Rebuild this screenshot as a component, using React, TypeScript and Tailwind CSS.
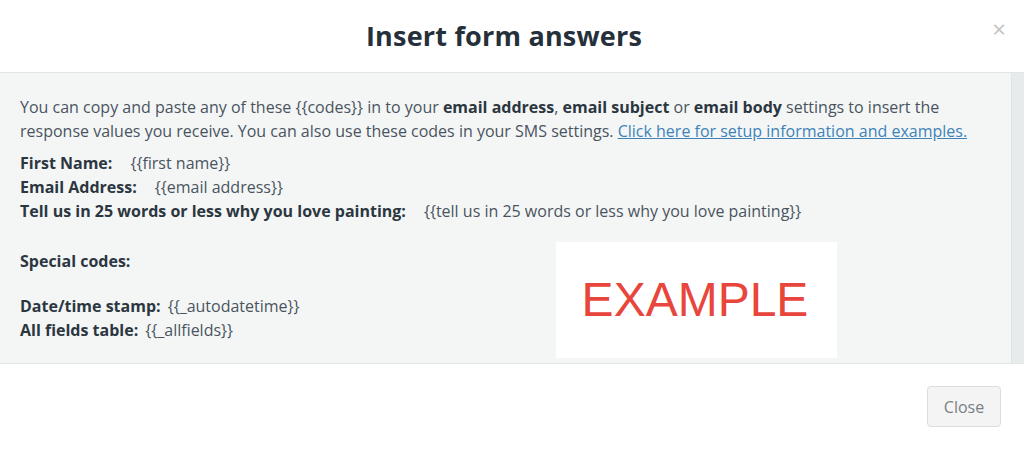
import React from "react";

export default function App() {
  const font = { fontFamily: '"Open Sans", "Noto Sans", sans-serif' };
  return (
    <div className="w-[1024px] h-[450px] bg-white flex flex-col overflow-hidden" style={font}>
      {/* Header */}
      <div className="h-[73px] shrink-0 flex items-center justify-center relative border-b border-[#e3e6e6]">
        <h1 className="text-[27px] font-bold text-[#25303a] tracking-[0.2px] mt-[1px] -ml-[16px]">Insert form answers</h1>
        <span className="absolute right-[18px] top-[17px] text-[24px] leading-none text-[#c4c4c4]">×</span>
      </div>

      {/* Body */}
      <div className="h-[291px] shrink-0 flex bg-[#f4f6f6] border-b border-[#e3e6e6]">
        <div className="flex-1 pl-[20px] pr-[20px] pt-[22px] text-[16px] leading-[24px] text-[#4a545e]">
          <p>
            You can copy and paste any of these {"{{codes}}"} in to your{" "}
            <b className="text-[#2c3640]">email address</b>,{" "}
            <b className="text-[#2c3640]">email subject</b> or{" "}
            <b className="text-[#2c3640]">email body</b> settings to insert the response values you receive. You can also use these codes in your SMS settings.{" "}
            <a className="text-[#3f82b8] underline">Click here for setup information and examples.</a>
          </p>
          <div className="mt-[8px]">
            <div>
              <b className="text-[#2c3640]">First Name:</b>
              <span className="ml-[18px]">{"{{first name}}"}</span>
            </div>
            <div>
              <b className="text-[#2c3640]">Email Address:</b>
              <span className="ml-[18px]">{"{{email address}}"}</span>
            </div>
            <div>
              <b className="text-[#2c3640]">Tell us in 25 words or less why you love painting:</b>
              <span className="ml-[18px]">{"{{tell us in 25 words or less why you love painting}}"}</span>
            </div>
          </div>
          <div className="flex items-start mt-[19px]">
            <div className="w-[536px] pt-[7px]">
              <div><b className="text-[#2c3640]">Special codes:</b></div>
              <div className="mt-[21px]">
                <b className="text-[#2c3640]">Date/time stamp:</b>
                <span className="ml-[7px]">{"{{_autodatetime}}"}</span>
              </div>
              <div>
                <b className="text-[#2c3640]">All fields table:</b>
                <span className="ml-[7px]">{"{{_allfields}}"}</span>
              </div>
            </div>
            <div className="w-[281px] h-[116px] bg-white flex items-center justify-center">
              <span
                className="text-[48px] leading-none text-[#e8463d] -ml-[3px]"
                style={{ fontFamily: '"Liberation Sans", Arial, sans-serif' }}
              >
                EXAMPLE
              </span>
            </div>
          </div>
        </div>
        <div className="w-[13px] shrink-0 bg-[#e8ebeb] border-l border-[#e1e4e4]" />
      </div>

      {/* Footer */}
      <div className="flex-1 flex items-start justify-end pr-[23px] pt-[22px]">
        <button className="w-[74px] h-[41px] bg-[#f4f4f4] border border-[#dcdcdc] rounded-[4px] text-[16px] text-[#7a7f84]">
          Close
        </button>
      </div>
    </div>
  );
}
